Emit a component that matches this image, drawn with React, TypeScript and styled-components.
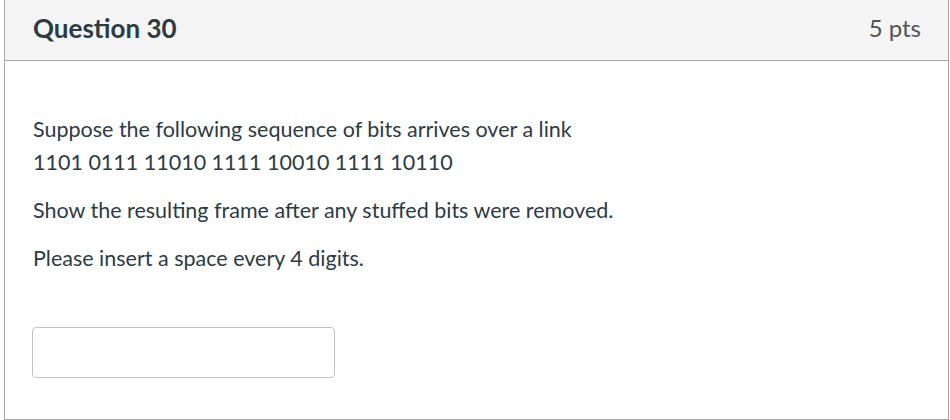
import styled, { createGlobalStyle } from "styled-components";

const Global = createGlobalStyle`
  body {
    margin: 0;
    background: #fff;
    font-family: Lato, "Open Sans", sans-serif;
    color: #2d3b45;
  }
`;

const Card = styled.div`
  box-sizing: border-box;
  width: 945px;
  margin: -1px 0 0 4px;
  border: 1px solid #a8a8a8;
`;

const Header = styled.div`
  display: flex;
  align-items: center;
  justify-content: space-between;
  box-sizing: border-box;
  height: 61px;
  padding: 0 27px 5px 28px;
  background: #f5f5f5;
  border-bottom: 1px solid #a8a8a8;
`;

const Title = styled.h2`
  margin: 0;
  font-size: 26px;
  font-weight: 700;
  color: #2d3b45;
`;

const Points = styled.div`
  font-size: 24px;
  color: #4f5458;
`;

const Body = styled.div`
  padding: 52px 28px 41px;
`;

const Para = styled.p`
  margin: 0 0 15px;
  font-size: 21.5px;
  line-height: 33px;
`;

const Answer = styled.input`
  box-sizing: border-box;
  display: block;
  width: 303px;
  height: 51px;
  margin: 52px 0 0 -1px;
  border: 1px solid #c4c4c4;
  border-radius: 4px;
  background: #fff;
`;

export default function App() {
  return (
    <>
      <Global />
      <Card>
        <Header>
          <Title>Question 30</Title>
          <Points>5 pts</Points>
        </Header>
        <Body>
          <Para>
            Suppose the following sequence of bits arrives over a link
            <br />
            1101 0111 11010 1111 10010 1111 10110
          </Para>
          <Para>Show the resulting frame after any stuffed bits were removed.</Para>
          <Para>Please insert a space every 4 digits.</Para>
          <Answer type="text" />
        </Body>
      </Card>
    </>
  );
}
